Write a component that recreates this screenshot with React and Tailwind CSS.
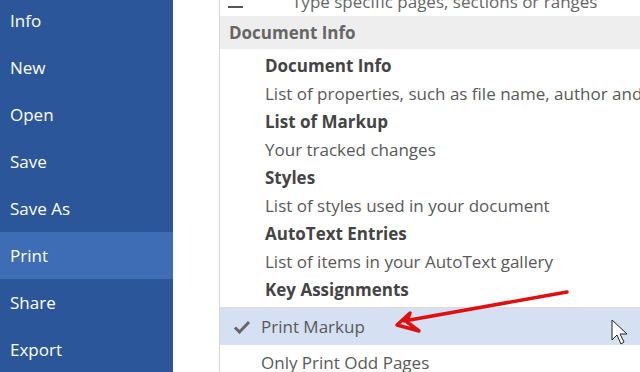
import React from "react";

const nav = ["Info", "New", "Open", "Save", "Save As", "Print", "Share", "Export"];

const items = [
  ["Document Info", "List of properties, such as file name, author and title"],
  ["List of Markup", "Your tracked changes"],
  ["Styles", "List of styles used in your document"],
  ["AutoText Entries", "List of items in your AutoText gallery"],
];

export default function App() {
  return (
    <div
      className="relative flex h-[372px] w-[640px] overflow-hidden bg-white"
      style={{ fontFamily: '"Open Sans", "Noto Sans", sans-serif' }}
    >
      <div className="flex w-[173px] shrink-0 flex-col bg-[#2b579a]">
        <div className="-mt-[3px] flex shrink-0 flex-col">
          {nav.map((n) => (
            <div
              key={n}
              className={`flex h-[47px] shrink-0 items-center pl-[10px] text-[17px] text-white ${
                n === "Print" ? "bg-[#3e6db5]" : ""
              }`}
            >
              {n}
            </div>
          ))}
        </div>
      </div>
      <div className="w-[46px] shrink-0" />
      <div className="flex min-w-0 flex-1 flex-col border-l border-[#d6d6d6]">
        <div className="-mt-[12px] flex h-[28px] shrink-0 items-center">
          <div className="flex w-[72px] shrink-0 justify-start pl-[8px]">
            <div className="mt-[10px] h-[2px] w-[15px] bg-[#555]" />
          </div>
          <div className="whitespace-nowrap text-[17px] text-[#666]">
            Type specific pages, sections or ranges
          </div>
        </div>
        <div className="flex h-[33px] shrink-0 items-center bg-[#eeeeee] pl-[9px] text-[17px] font-bold text-[#666]">
          Document Info
        </div>
        <div className="flex shrink-0 flex-col pl-[45px] pt-[3px]">
          {items.map(([t, d]) => (
            <React.Fragment key={t}>
              <div className="flex h-[28px] shrink-0 items-center whitespace-nowrap text-[17px] font-bold text-[#444]">
                {t}
              </div>
              <div className="flex h-[28px] shrink-0 items-center whitespace-nowrap text-[17px] text-[#595959]">
                {d}
              </div>
            </React.Fragment>
          ))}
          <div className="flex h-[28px] shrink-0 items-center whitespace-nowrap text-[17px] font-bold text-[#444]">
            Key Assignments
          </div>
        </div>
        <div className="mt-[3px] shrink-0 border-t border-[#dcdcdc]" />
        <div className="flex h-[37px] shrink-0 items-center bg-[#d5e1f2]">
          <div className="flex w-[41px] shrink-0 justify-center pl-[2px]">
            <svg width="18" height="14" viewBox="0 0 18 14">
              <path d="M2 7.5 L6.5 12 L16 2" fill="none" stroke="#666" strokeWidth="3" />
            </svg>
          </div>
          <div className="whitespace-nowrap text-[17px] text-[#595959]">Print Markup</div>
        </div>
        <div className="flex h-[36px] shrink-0 items-center whitespace-nowrap pl-[41px] text-[17px] text-[#595959]">
          Only Print Odd Pages
        </div>
      </div>

      <svg
        className="pointer-events-none absolute left-0 top-0"
        width="640"
        height="372"
        viewBox="0 0 640 372"
      >
        <g stroke="#e01010" strokeWidth="3.5" fill="none" strokeLinecap="round" strokeLinejoin="round">
          <path d="M567 292 L404 321" />
          <path d="M397 325 L410 313 L407 322 L419 331 Z" />
        </g>
        <path
          d="M612 320 L612 340 L617 335 L621 344 L624 342 L620 334 L627 334 Z"
          fill="#fff"
          stroke="#222"
          strokeWidth="1"
          strokeLinejoin="round"
        />
      </svg>
    </div>
  );
}
